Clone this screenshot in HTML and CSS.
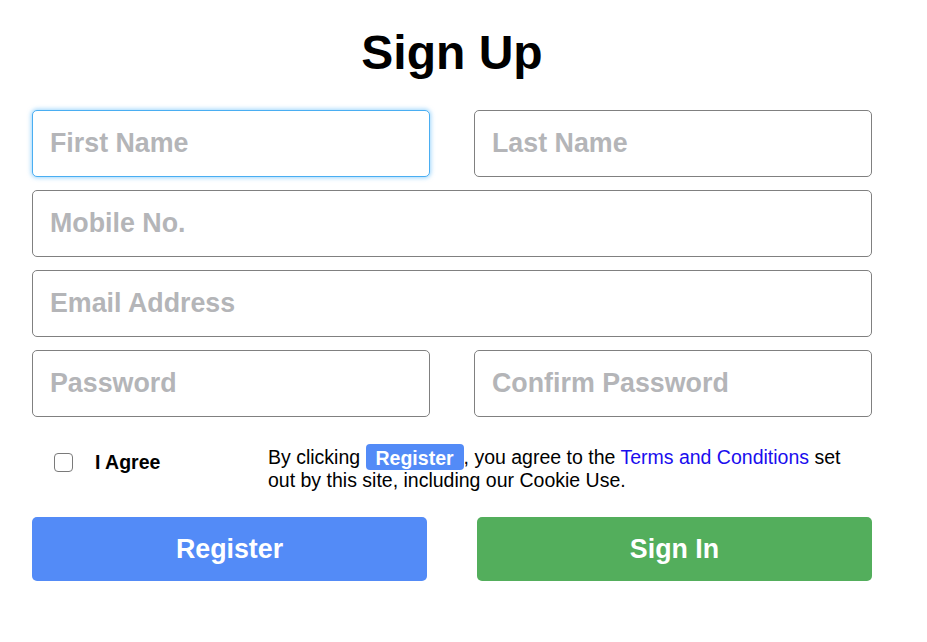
FILE: index.html
```html
<!DOCTYPE html>
<html lang="en">
<head>
<meta charset="utf-8">
<title>Sign Up</title>
<link rel="stylesheet" href="styles.css">
</head>
<body>
<form class="signup">
  <h1 class="title">Sign Up</h1>
  <div class="row two">
    <input class="field focused" type="text" placeholder="First Name">
    <input class="field" type="text" placeholder="Last Name">
  </div>
  <div class="row">
    <input class="field" type="text" placeholder="Mobile No.">
  </div>
  <div class="row">
    <input class="field" type="text" placeholder="Email Address">
  </div>
  <div class="row two">
    <input class="field" type="password" placeholder="Password">
    <input class="field" type="password" placeholder="Confirm Password">
  </div>
  <div class="agree">
    <label class="agree-left">
      <input class="check" type="checkbox">
      <span class="agree-label">I Agree</span>
    </label>
    <p class="terms">By clicking <span class="badge">Register</span>, you agree to the <a class="link" href="#">Terms and Conditions</a> set out by this site, including our Cookie Use.</p>
  </div>
  <div class="actions">
    <button type="button" class="btn btn-blue">Register</button>
    <button type="button" class="btn btn-green">Sign In</button>
  </div>
</form>
</body>
</html>
```

FILE: styles.css
```css
* { box-sizing: border-box; }

html, body {
  margin: 0;
  padding: 0;
  background: #ffffff;
}

body {
  font-family: "Liberation Sans", Arial, sans-serif;
  color: #000000;
}

.signup {
  width: 840px;
  margin: 0 0 0 32px;
  display: flex;
  flex-direction: column;
}

.title {
  margin: 25px 0 30px;
  font-size: 48px;
  line-height: 55px;
  font-weight: 700;
  text-align: center;
}

.row {
  display: grid;
  grid-template-columns: 1fr;
  margin-bottom: 13px;
}

.row.two {
  grid-template-columns: 1fr 1fr;
  column-gap: 44px;
}

.field {
  height: 67px;
  width: 100%;
  border: 1px solid #808080;
  border-radius: 5px;
  padding: 0 17px;
  font-family: "Liberation Sans", Arial, sans-serif;
  font-size: 26.8px;
  font-weight: 700;
  color: #333333;
  background: #ffffff;
  outline: none;
}

.field::placeholder {
  color: #b4b5b8;
  opacity: 1;
}

.field.focused {
  border-color: #4aaef2;
  box-shadow: 0 0 4px 1px rgba(80, 180, 250, 0.55);
}

.agree {
  display: grid;
  grid-template-columns: 236px 1fr;
  align-items: start;
  margin-top: 16px;
  margin-bottom: 25px;
}

.agree-left {
  display: flex;
  align-items: center;
  gap: 22px;
  padding-left: 22px;
  margin-top: 5px;
}

.check {
  appearance: none;
  -webkit-appearance: none;
  width: 19px;
  height: 19px;
  margin: 0;
  border: 1.5px solid #7a7a7a;
  border-radius: 4px;
  background: #ffffff;
}

.agree-label {
  font-size: 19.5px;
  font-weight: 700;
  line-height: 23px;
}

.terms {
  margin: 0;
  font-size: 19.5px;
  line-height: 23px;
}

.badge {
  background: #538bf7;
  color: #ffffff;
  font-weight: 700;
  padding: 2.5px 10px 1.5px;
  border-radius: 4px;
}

.link {
  color: #1a0dee;
  text-decoration: none;
}

.actions {
  display: grid;
  grid-template-columns: 1fr 1fr;
  column-gap: 50px;
}

.btn {
  height: 64px;
  border: none;
  border-radius: 5px;
  color: #ffffff;
  font-family: "Liberation Sans", Arial, sans-serif;
  font-size: 26.8px;
  font-weight: 700;
  cursor: pointer;
}

.btn-blue { background: #538bf7; }
.btn-green { background: #53ae5c; }
```
